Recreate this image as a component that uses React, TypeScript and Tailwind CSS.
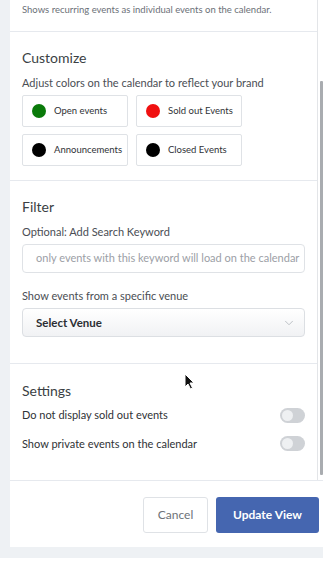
import React from 'react';
import { ChevronDown } from 'lucide-react';

const COLORS = [
  { label: 'Open events', color: 'bg-[#0a7a0a]' },
  { label: 'Sold out Events', color: 'bg-[#f01010]' },
  { label: 'Announcements', color: 'bg-black' },
  { label: 'Closed Events', color: 'bg-black' },
];

function Toggle() {
  return (
    <div className="w-[25px] h-[15px] rounded-full bg-[#cfd2d6] flex items-center px-[2px]">
      <div className="w-[11px] h-[11px] rounded-full bg-[#eef0f2]" />
    </div>
  );
}

export default function App() {
  return (
    <div
      className="relative w-[323px] h-[568px] bg-white overflow-hidden text-[#3b3f44]"
      style={{ fontFamily: 'Lato, "Open Sans", sans-serif' }}
    >
      <div className="h-[558px] bg-[#eef1f4] pl-[10px]">
        <div className="h-[547px] bg-white flex flex-col">
          {/* scrolling body */}
          <div className="h-[481px] flex border-b border-[#e6e9ee]">
            <div className="flex-1 flex flex-col">
              <div className="h-[32px] border-b border-[#e6e9ee] px-[12px] pt-[3px]">
                <p className="text-[9.5px] text-[#6b7077]">Shows recurring events as individual events on the calendar.</p>
              </div>

              {/* Customize */}
              <div className="h-[149px] border-b border-[#e6e9ee] px-[12px] pt-[18px]">
                <h3 className="text-[14px] leading-[16px] text-[#3b3f44]">Customize</h3>
                <p className="mt-[10px] text-[11px] leading-[13px] text-[#4a4e54]">Adjust colors on the calendar to reflect your brand</p>
                <div className="mt-[6px] grid grid-cols-[106px_106px] gap-x-[8px] gap-y-[7px]">
                  {COLORS.map((c) => (
                    <div key={c.label} className="h-[32px] border border-[#dfe2e6] rounded-[2px] flex items-center gap-[8px] pl-[9px]">
                      <span className={`w-[14px] h-[14px] rounded-full ${c.color}`} />
                      <span className="text-[9.5px] text-[#2f3236]">{c.label}</span>
                    </div>
                  ))}
                </div>
              </div>

              {/* Filter */}
              <div className="h-[183px] border-b border-[#e6e9ee] px-[12px] pt-[18px]">
                <h3 className="text-[14px] leading-[16px]">Filter</h3>
                <p className="mt-[10px] text-[11px] leading-[13px] text-[#4a4e54]">Optional: Add Search Keyword</p>
                <div className="mt-[6px] h-[29px] border border-[#dfe2e6] rounded-[4px] flex items-center pl-[13px] overflow-hidden whitespace-nowrap">
                  <span className="text-[11px] text-[#9ca0a6]">only events with this keyword will load on the calendar</span>
                </div>
                <p className="mt-[16px] text-[11px] leading-[13px] text-[#4a4e54]">Show events from a specific venue</p>
                <div className="mt-[6px] h-[29px] border border-[#dcdfe3] rounded-[4px] flex items-center justify-between pl-[13px] pr-[8px] bg-gradient-to-b from-white to-[#f1f2f4]">
                  <span className="text-[11.5px] font-bold text-[#2b2e33]">Select Venue</span>
                  <ChevronDown className="w-[14px] h-[14px] text-[#b5b9be]" strokeWidth={1.5} />
                </div>
              </div>

              {/* Settings */}
              <div className="flex-1 px-[12px] pt-[19px]">
                <h3 className="text-[14px] leading-[16px]">Settings</h3>
                <div className="mt-[8px] flex items-center justify-between">
                  <span className="text-[11px] text-[#2f3236]">Do not display sold out events</span>
                  <Toggle />
                </div>
                <div className="mt-[12px] flex items-center justify-between">
                  <span className="text-[11px] text-[#2f3236]">Show private events on the calendar</span>
                  <Toggle />
                </div>
              </div>
            </div>
            {/* scrollbar */}
            <div className="w-[6px] border-l border-[#e3e5e8] flex flex-col pt-[81px] pl-[2px]">
              <div className="h-[394px] w-[3px] bg-[#a9acb0] rounded-[1px]" />
            </div>
          </div>

          {/* footer */}
          <div className="flex-1 flex justify-end items-start pt-[16px] pr-[4px] gap-[8px]">
            <button className="w-[65px] h-[36px] border border-[#dfe2e6] rounded-[3px] bg-white text-[12px] text-[#6d7278]">Cancel</button>
            <button className="w-[103px] h-[36px] rounded-[3px] bg-[#4566b0] text-white text-[12px] font-bold">Update View</button>
          </div>
        </div>
      </div>

      {/* mouse pointer */}
      <svg className="absolute left-[184px] top-[373px]" width="11" height="17" viewBox="0 0 11 17">
        <path d="M1 1 L1 14 L4 11 L6.5 16 L8.5 15 L6 10 L10 10 Z" fill="#111" stroke="#fff" strokeWidth="1" />
      </svg>
    </div>
  );
}
